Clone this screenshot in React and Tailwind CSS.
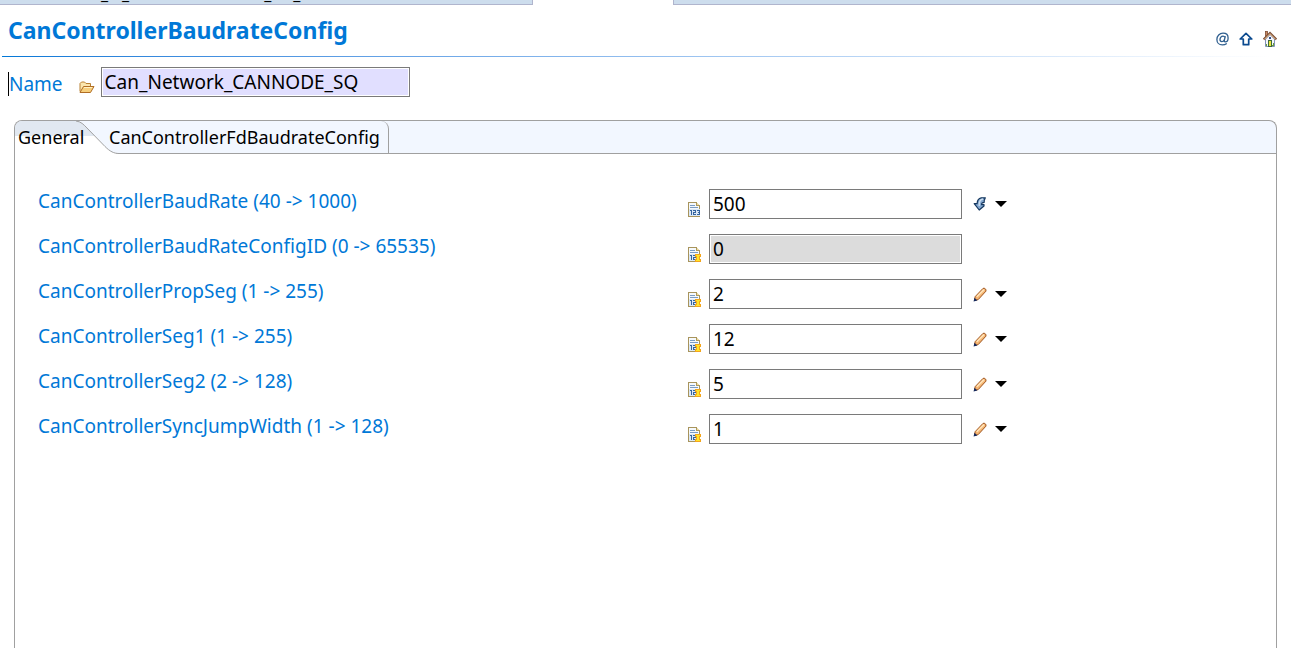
import { useState } from 'react';

const params = [
  { id: 'baudRate', label: 'CanControllerBaudRate (40 -> 1000)', value: '500', action: 'calc' },
  { id: 'configId', label: 'CanControllerBaudRateConfigID (0 -> 65535)', value: '0', badge: true, readOnly: true },
  { id: 'propSeg', label: 'CanControllerPropSeg (1 -> 255)', value: '2', badge: true, action: 'edit' },
  { id: 'seg1', label: 'CanControllerSeg1 (1 -> 255)', value: '12', badge: true, action: 'edit' },
  { id: 'seg2', label: 'CanControllerSeg2 (2 -> 128)', value: '5', badge: true, action: 'edit' },
  { id: 'syncJumpWidth', label: 'CanControllerSyncJumpWidth (1 -> 128)', value: '1', badge: true, action: 'edit' },
];

function AtIcon() {
  return (
    <svg width="13" height="14" viewBox="0 0 13 14" fill="none" stroke="#2f5f8f" strokeWidth="1.3">
      <path d="M10.8 11.4C9.6 12.3 8.2 12.9 6.3 12.9C3 12.9 0.9 10.5 0.9 7.4C0.9 3.8 3.6 1.2 7 1.2C10 1.2 12.1 3.1 12.1 5.9C12.1 8.3 10.7 9.8 9.3 9.8C8.3 9.8 8.1 9.2 8.4 8.1L9.3 4.2" />
      <path d="M8.9 5.4C8.6 4.5 8 4.1 7 4.1C5.3 4.1 4 5.8 4 7.6C4 8.9 4.7 9.7 5.8 9.7C7.1 9.7 8 8.8 8.4 7.7" />
    </svg>
  );
}

function UpIcon() {
  return (
    <svg width="14" height="14" viewBox="0 0 14 14">
      <path d="M7 1.3L12.8 7H9.7V12.7H4.3V7H1.2Z" fill="#fff" stroke="#0b4a8f" strokeWidth="1.7" strokeLinejoin="round" />
    </svg>
  );
}

function HomeIcon() {
  return (
    <svg width="14" height="16" viewBox="0 0 14 16">
      <rect x="2.5" y="0.5" width="2" height="5" fill="#c98a62" stroke="#7d4b33" strokeWidth="0.8" />
      <path d="M2.5 8L7 3.5L11.5 8V15.5H2.5Z" fill="#f3f6fc" stroke="#8292b8" />
      <path d="M0.6 8.4L7 2L13.4 8.4" fill="none" stroke="#7b4f38" strokeWidth="2.2" />
      <path d="M1.3 8.4L7 2.7L12.7 8.4" fill="none" stroke="#f0c795" strokeWidth="1" />
      <rect x="6" y="6" width="2" height="2" fill="#2f4c86" />
      <rect x="5.5" y="9.5" width="3" height="6" fill="#e9e340" stroke="#3f6a3a" />
      <path d="M3.5 13V15M10.5 12V15M9.5 14V15" stroke="#6aa03d" />
    </svg>
  );
}

function FolderIcon() {
  return (
    <svg width="16" height="13" viewBox="0 0 16 13" strokeLinejoin="round">
      <path d="M1 10.5V2.5L2.5 1H5.5L7 2.5H11.5V5" fill="#fbe6ae" stroke="#b98032" />
      <path d="M1 11.5L4.5 5.5H15L11.5 11.5Z" fill="#f7cf7c" stroke="#b06d24" />
      <path d="M5 6.5H13.2" stroke="#fff0c4" />
    </svg>
  );
}

function NumberIcon({ badge }) {
  return (
    <svg width="13" height="15" viewBox="0 0 13 15" shapeRendering="crispEdges">
      <path d="M0.5 0.5H8.5L11.5 3.5V14.5H0.5Z" fill="#f5f9fd" stroke="#a8945c" />
      <path d="M8.5 0.5V3.5H11.5" fill="#ead9a4" stroke="#b09a5c" />
      <path d="M2 3.5H7M2 5.5H10" stroke="#7b9cc4" />
      <rect x="1" y="7" width="11" height="7" fill="#dbe8f6" />
      <path d="M2 8.5H3.5V13M5 8.5H7.5V10.5H5.5V12.5H8M9 8.5H11.5V12.5H9M9.5 10.5H11" fill="none" stroke="#35649e" />
      {badge && <path d="M7.5 7.5H12.5V9.5H11.5V12.5H12.5V14.5H7.5V12.5H8.5V9.5H7.5Z" fill="#ffe52a" stroke="#f3a51c" />}
    </svg>
  );
}

function CalcIcon() {
  return (
    <svg width="14" height="14" viewBox="0 0 14 14">
      <path d="M12.3 0.8H8.2C5.8 1.2 4.3 3 4.1 6.6H1.2L6.2 13L11 9V7.6H8.6C8.4 6.2 9.4 5.5 11.2 5.3V3.6Z" fill="#83a7d0" stroke="#16385f" strokeWidth="1.2" strokeLinejoin="round" />
      <path d="M10 2C7 2.4 6 4.5 6.2 9" fill="none" stroke="#cfe0f1" strokeWidth="1.3" />
    </svg>
  );
}

function PencilIcon() {
  return (
    <svg width="14" height="15" viewBox="0 0 14 15">
      <path d="M1.4 13.4L2.2 9.6L10 1.4C11.5 0.5 13.7 2.5 12.9 4.2L5.2 12.6Z" fill="#f5b571" stroke="#a0561f" strokeLinejoin="round" />
      <path d="M3.8 9.8L11 2.6" stroke="#ffe3b7" strokeWidth="1.6" />
      <path d="M0.6 14.4L1.5 10.7L4.4 13.4Z" fill="#14285c" />
    </svg>
  );
}

function TabSlope() {
  return (
    <svg width="46" height="33" viewBox="0 0 46 33" className="relative z-10 shrink-0">
      <path d="M0 0H1C5 0.5 8 4 10 6L19 15H0Z" fill="#e1e8f1" />
      <path d="M0 15H19L29 25.5C34 30.5 38 32.5 43 32.5V33H0Z" fill="#fff" />
      <path d="M0 0C5 0.5 8 4 10 6L29 25.5C34 30.5 38 32.5 43 32.5H46" fill="none" stroke="#a0a0a0" />
    </svg>
  );
}

function ParamRow({ param, value, onChange }) {
  return (
    <div className="grid h-[30px] grid-cols-[21fr_19fr]">
      <label htmlFor={param.id} className="text-[19px] leading-6 whitespace-nowrap text-[#0078d7]">{param.label}</label>
      <div className="flex items-center">
        <span className="w-[21px] shrink-0 pt-2.5"><NumberIcon badge={param.badge} /></span>
        <input
          id={param.id}
          value={value}
          readOnly={param.readOnly}
          onChange={(e) => onChange(param.id, e.target.value)}
          className="h-[30px] w-[253px] border border-[#7a7a7a] bg-white px-[3px] text-[19px] text-black outline-none read-only:bg-[#dcdcdc] read-only:shadow-[inset_0_0_0_1px_white]"
        />
        {param.action && (
          <button type="button" aria-label={`${param.label} actions`} className="ml-[11px] flex items-center gap-2">
            {param.action === 'calc' ? <CalcIcon /> : <PencilIcon />}
            <svg width="12" height="6" viewBox="0 0 12 6"><path d="M0 0H12L6 6Z" fill="#000" /></svg>
          </button>
        )}
      </div>
    </div>
  );
}

export default function App() {
  const [name, setName] = useState('Can_Network_CANNODE_SQ');
  const [values, setValues] = useState(() => Object.fromEntries(params.map((p) => [p.id, p.value])));

  const update = (id, value) => setValues((prev) => ({ ...prev, [id]: value }));

  return (
    <main className="flex min-h-screen flex-col bg-white font-['Noto_Sans',sans-serif]">
      <div className="flex h-[5px] justify-between">
        <div className="flex w-[533px] items-end overflow-hidden border-r border-b border-[#b0b5cd] bg-[#cddded] pb-0.5 pl-[101px] text-[16px] leading-4 text-black">
          <span className="mr-3.5">_</span>
          <span className="mr-[135px]">_</span>
          <span className="mr-[22px]">_</span>
          <span>_</span>
        </div>
        <div className="ml-[140px] flex-1 border-b border-l border-[#b0b5cd] bg-[#cddded]" />
      </div>

      <header className="flex h-[51px] items-center justify-between pr-3.5 pl-2">
        <h1 className="pb-0.5 text-[23px] leading-8 font-bold text-[#0078d7]">CanControllerBaudrateConfig</h1>
        <nav className="flex items-center gap-2.5 pt-4">
          <button type="button" aria-label="Reference"><AtIcon /></button>
          <button type="button" aria-label="Up"><UpIcon /></button>
          <button type="button" aria-label="Home"><HomeIcon /></button>
        </nav>
      </header>
      <div className="mr-5 ml-0.5 h-px bg-linear-to-r from-[#0078d7] to-white" />

      <div className="mt-2.5 flex items-center pl-2">
        <label htmlFor="name" className="mt-1 border-l border-black text-[19px] leading-6 text-[#0078d7]">Name</label>
        <span className="mt-2.5 ml-4"><FolderIcon /></span>
        <input
          id="name"
          value={name}
          onChange={(e) => setName(e.target.value)}
          className="ml-1.5 h-[30px] w-[309px] border border-[#7a7a7a] bg-[#e1dfff] px-[3px] text-[19px] text-black shadow-[inset_0_0_0_1px_white] outline-none"
        />
      </div>

      <section className="mt-[23px] mr-3.5 ml-3.5 flex flex-1 flex-col">
        <div role="tablist" className="flex h-[34px] overflow-hidden rounded-t-lg border-x border-t border-[#a0a0a0] bg-[#f2f7ff] text-[18px] text-black">
          <button type="button" role="tab" aria-selected="true" className="relative z-20 w-[61px] shrink-0 bg-linear-to-b from-[#e1e8f1] from-45% to-white to-45% pl-[3px] text-left whitespace-nowrap">General</button>
          <TabSlope />
          <button type="button" role="tab" aria-selected="false" className="-ml-7 w-[295px] rounded-tr-lg border-r border-b border-[#a0a0a0] pl-[15px] text-left whitespace-nowrap">CanControllerFdBaudrateConfig</button>
          <div className="flex-1 border-b border-[#a0a0a0]" />
        </div>
        <div role="tabpanel" className="flex flex-1 flex-col gap-[15px] border-x border-[#a0a0a0] pt-[35px] pl-[23px]">
          {params.map((param) => (
            <ParamRow key={param.id} param={param} value={values[param.id]} onChange={update} />
          ))}
        </div>
      </section>
    </main>
  );
}
